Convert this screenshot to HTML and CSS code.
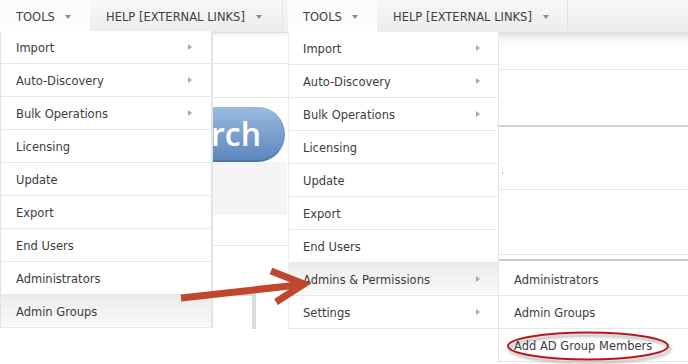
FILE: index.html
```html
<!DOCTYPE html>
<html>
<head>
<meta charset="utf-8">
<link rel="stylesheet" href="styles.css">
</head>
<body>
<div class="shot">
  <section class="panel panel-left">
    <nav class="nav">
      <div class="tab tab-active lt1">TOOLS<span class="caret"></span></div>
      <div class="tab lt2">HELP [EXTERNAL LINKS]<span class="caret caret-help"></span></div>
      <div class="tab-rest"></div>
    </nav>
    <div class="bg">
      <div class="bl-row1"></div>
      <div class="bl-row2"></div>
      <div class="bl-search">
        <div class="btnrow"><div class="search-btn">Search</div></div>
        <div class="graypad"></div>
      </div>
      <div class="bl-row3"></div>
      <div class="bl-row4"></div>
      <div class="bl-box"></div>
    </div>
    <ul class="menu menu-left">
      <li class="item">Import<span class="tri"></span></li>
      <li class="item">Auto-Discovery<span class="tri"></span></li>
      <li class="item">Bulk Operations<span class="tri"></span></li>
      <li class="item">Licensing</li>
      <li class="item">Update</li>
      <li class="item">Export</li>
      <li class="item">End Users</li>
      <li class="item">Administrators</li>
      <li class="item item-hot">Admin Groups</li>
    </ul>
  </section>
  <section class="panel panel-right">
    <nav class="nav">
      <div class="tab tab-active rt1">TOOLS<span class="caret"></span></div>
      <div class="tab rt2">HELP [EXTERNAL LINKS]<span class="caret caret-help"></span></div>
      <div class="tab-rest"></div>
    </nav>
    <div class="bg">
      <div class="br-row1"></div>
      <div class="br-row2"></div>
      <div class="br-row3"><span class="dot"></span></div>
      <div class="br-row4"></div>
      <div class="br-row5"></div>
    </div>
    <ul class="menu menu-right">
      <li class="item">Import<span class="tri"></span></li>
      <li class="item">Auto-Discovery<span class="tri"></span></li>
      <li class="item">Bulk Operations<span class="tri"></span></li>
      <li class="item">Licensing</li>
      <li class="item">Update</li>
      <li class="item">Export</li>
      <li class="item">End Users</li>
      <li class="item item-hot">Admins &amp; Permissions<span class="tri"></span></li>
      <li class="item">Settings<span class="tri"></span></li>
    </ul>
    <ul class="submenu">
      <li class="item">Administrators</li>
      <li class="item">Admin Groups</li>
      <li class="item">Add AD Group Members</li>
    </ul>
  </section>
  <svg class="overlay" width="688" height="364" viewBox="0 0 688 364">
    <defs>
      <filter id="sh" x="-10%" y="-30%" width="120%" height="170%">
        <feGaussianBlur in="SourceAlpha" stdDeviation="1.5"/>
        <feOffset dx="2" dy="3" result="b"/>
        <feComponentTransfer><feFuncA type="linear" slope="0.35"/></feComponentTransfer>
        <feMerge><feMergeNode/><feMergeNode in="SourceGraphic"/></feMerge>
      </filter>
    </defs>
    <line x1="181" y1="298" x2="298" y2="285" stroke="#c0472d" stroke-width="7"/>
    <polyline points="271,271 304,284 276,302" fill="none" stroke="#c0472d" stroke-width="7" stroke-linejoin="miter"/>
    <ellipse cx="588" cy="346" rx="80" ry="13.5" fill="none" stroke="#b3191c" stroke-width="2" filter="url(#sh)"/>
  </svg>
</div>
</body>
</html>
```

FILE: styles.css
```css
html, body {
  margin: 0;
  padding: 0;
  background: #fff;
}
body {
  width: 688px;
  height: 364px;
  overflow: hidden;
  font-family: "DejaVu Sans", Verdana, sans-serif;
  font-size: 11.5px;
  color: #3c3c3c;
}
.shot {
  position: relative;
  display: flex;
  width: 688px;
  height: 364px;
}
.panel {
  position: relative;
  height: 364px;
  overflow: hidden;
}
.panel-left { width: 288px; }
.panel-right { width: 400px; }

/* nav bar */
.nav {
  position: relative;
  z-index: 2;
  display: flex;
  height: 32px;
  border-bottom: 1px solid #dedede;
  background: linear-gradient(#f8f8f8, #ececec);
  box-shadow: 0 2px 4px rgba(0, 0, 0, 0.07);
}
.tab {
  display: flex;
  align-items: center;
  box-sizing: border-box;
  height: 32px;
  padding-top: 2px;
  color: #404040;
  white-space: nowrap;
}
.tab-active {
  background: linear-gradient(#fbfbfb, #fdfdfd);
}
.lt1 { width: 90px; padding-left: 16px; }
.lt2 { width: 193px; padding-left: 16px; border-right: 1px solid #e4e4e4; }
.rt1 { width: 89px; padding-left: 15px; }
.rt2 { width: 191px; padding-left: 16px; border-right: 1px solid #e2e2e2; }
.tab-rest { flex: 1; }
.caret {
  display: inline-block;
  width: 0;
  height: 0;
  margin-left: 10px;
  margin-top: 0;
  border-left: 3.5px solid transparent;
  border-right: 3.5px solid transparent;
  border-top: 4px solid #8c8c8c;
}
.caret-help { margin-left: 11px; }

/* background of left shot */
.bl-row1 { height: 30px; border-bottom: 1px solid #e8e8e8; }
.bl-row2 { height: 33px; border-bottom: 1px solid #e8e8e8; }
.bl-search { display: flex; flex-direction: column; }
.btnrow {
  display: flex;
  justify-content: flex-end;
  margin-top: 9px;
  padding-right: 3px;
  height: 55px;
}
.search-btn {
  box-sizing: border-box;
  width: 190px;
  height: 55px;
  padding-right: 23px;
  border-radius: 28px;
  background: linear-gradient(#9cbadf, #5d87bd);
  border-bottom: 2px solid #4f76aa;
  border-right: 1px solid #6a8fc2;
  color: #fff;
  font-family: "Open Sans", sans-serif;
  font-weight: 600;
  font-size: 32px;
  line-height: 53px;
  text-align: right;
}
.graypad { height: 53px; background: #f5f5f5; margin-right: 1px; }
.bl-row3 { height: 30px; border-bottom: 1px solid #e8e8e8; }
.bl-row4 { height: 47px; }
.bl-box {
  width: 252px;
  height: 33px;
  border-top: 3px solid #dadada;
  border-right: 4px solid #dadada;
}

/* background of right shot */
.br-row1 {
  height: 36px;
  border-bottom: 1px solid #e8e8e8;
  background: linear-gradient(#eeeeee, #ffffff 15px);
}
.br-row2 { height: 55px; border-bottom: 2px solid #d2d2d2; }
.br-row3 {
  display: flex;
  align-items: flex-start;
  height: 62px;
  border-bottom: 1px solid #e6e6e6;
}
.dot {
  width: 1px;
  height: 2px;
  margin-left: 214px;
  margin-top: 45px;
  background: #aaa;
}
.br-row4 { height: 64px; border-bottom: 1px solid #e2e2e2; }
.br-row5 { height: 4px; border-bottom: 2px solid #cdcdcd; }

/* dropdown menus */
.menu, .submenu {
  position: absolute;
  z-index: 3;
  margin: 0;
  padding: 0;
  list-style: none;
  background: #fff;
  box-sizing: border-box;
}
.menu-left {
  top: 31px;
  left: 0;
  width: 213px;
  border-left: 1px solid #e2e2e2;
  border-right: 2px solid #e4e4e4;
}
.menu-right {
  top: 32px;
  left: 0;
  width: 211px;
  border-left: 1px solid #ececec;
  border-right: 1px solid #e4e4e4;
}
.submenu {
  top: 263px;
  left: 210px;
  width: 190px;
  border-left: 1px solid #e4e4e4;
}
.item {
  display: flex;
  align-items: center;
  height: 30px;
  padding-top: 2px;
  border-bottom: 1px solid #e8e8e8;
  white-space: nowrap;
}
.menu-left .item { padding-left: 15px; padding-right: 19px; }
.menu-right .item { padding-left: 14px; padding-right: 18px; }
.submenu .item { padding-left: 15px; }
.item-hot {
  background: linear-gradient(#ebebeb, #fbfbfb);
}
.tri {
  width: 0;
  height: 0;
  margin-left: auto;
  margin-top: -3px;
  border-top: 3.5px solid transparent;
  border-bottom: 3.5px solid transparent;
  border-left: 4px solid #a8a8a8;
}

/* annotation overlay */
.overlay {
  position: absolute;
  top: 0;
  left: 0;
  z-index: 5;
  pointer-events: none;
}
```
